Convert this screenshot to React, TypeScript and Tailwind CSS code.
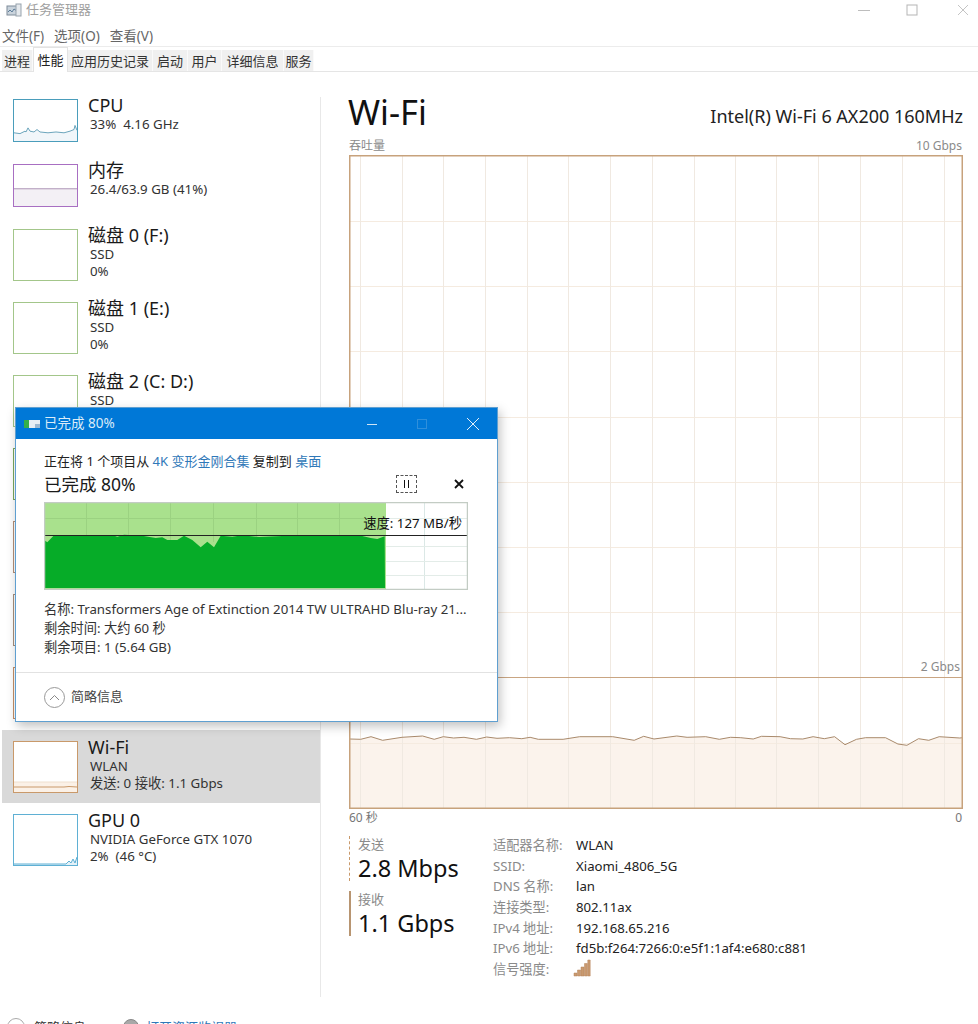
import type { ReactNode } from 'react';

const WIFI_LINE = [
  [24, 237], [50, 238], [75, 230], [103, 241], [150, 232], [200, 228], [228, 238], [250, 230], [275, 234], [300, 232],
  [330, 238], [355, 231], [380, 235], [410, 233], [440, 236], [460, 232], [480, 238], [540, 238], [580, 230], [660, 230],
  [712, 241], [735, 229], [760, 237], [815, 228], [840, 232], [885, 230], [918, 238], [945, 232], [970, 233], [1000, 237],
  [1020, 229], [1065, 230], [1090, 236], [1120, 237], [1145, 230], [1172, 236], [1197, 230], [1222, 254], [1250, 238],
  [1272, 233], [1320, 233], [1350, 252], [1372, 256], [1400, 236], [1425, 241], [1450, 230], [1500, 234], [1528, 230],
].map(([x, y]) => [x / 2.42 - 9, y / 3 + 505]);

const COPY_LINE = [
  [45, 138], [55, 145], [75, 124], [250, 123], [265, 128], [285, 122], [340, 125], [380, 132], [400, 130], [415, 138],
  [445, 138], [465, 125], [490, 138], [515, 160], [535, 143], [555, 160], [575, 125], [610, 128], [640, 124], [690, 129],
  [760, 126], [900, 125], [990, 124], [1025, 132], [1045, 135], [1067, 127],
].map(([x, y]) => [x / 3 - 15, y / 3 - 8]);

const toPoints = (pts: number[][]) => pts.map(([x, y]) => `${x.toFixed(1)},${y.toFixed(1)}`).join(' ');

const TABS = [
  { label: '进程', w: 'w-[31px]' },
  { label: '性能', w: 'w-[35px]', active: true },
  { label: '应用历史记录', w: 'w-[85px]' },
  { label: '启动', w: 'w-[35px]' },
  { label: '用户', w: 'w-[34px]' },
  { label: '详细信息', w: 'w-[62px]' },
  { label: '服务', w: 'w-[30px]' },
];

const DETAILS = [
  ['适配器名称:', 'WLAN'],
  ['SSID:', 'Xiaomi_4806_5G'],
  ['DNS 名称:', 'lan'],
  ['连接类型:', '802.11ax'],
  ['IPv4 地址:', '192.168.65.216'],
  ['IPv6 地址:', 'fd5b:f264:7266:0:e5f1:1af4:e680:c881'],
];

function Thumb({ border, h = 'h-[52px]', children }: { border: string; h?: string; children?: ReactNode }) {
  return (
    <div className={`w-[65px] ${h} mt-[5px] shrink-0 border-[1.5px] bg-white ${border}`}>
      <svg viewBox="0 0 63 50" preserveAspectRatio="none" className="w-full h-full block">
        {children}
      </svg>
    </div>
  );
}

function Item({ title, lines, thumb, tall = true, selected }: {
  title?: string; lines?: string[]; thumb: ReactNode; tall?: boolean; selected?: boolean;
}) {
  return (
    <div className={`flex items-start gap-[10px] pl-[11px] pt-[6px] ${tall ? 'h-[73px]' : 'h-[65px]'} ${selected ? 'bg-[#d9d9d9]' : ''}`}>
      {thumb}
      <div className="min-w-0">
        <div className="text-[18px] leading-[22px] text-[#1a1a1a] whitespace-nowrap">{title}</div>
        {lines?.map((l) => (
          <div key={l} className="pl-[2px] text-[13.3px] leading-[17px] text-[#333] whitespace-pre">{l}</div>
        ))}
      </div>
    </div>
  );
}

function AppIcon() {
  return (
    <svg width="16" height="15" viewBox="0 0 16 15" className="shrink-0">
      <rect x="1" y="3" width="11" height="9" fill="#c9d3dc" stroke="#7f8c99" />
      <path d="M2 9l2-2 2 2 2-3 3 2" fill="none" stroke="#5b7c99" />
      <rect x="10" y="1" width="5" height="12" fill="#e5e9ed" stroke="#98a3ad" />
    </svg>
  );
}

function WifiChart() {
  const hLines = [66, 131, 196, 262, 327, 392, 457, 588];
  const vLines = [11, 53, 94, 136, 178, 219, 261, 303, 345, 386, 427, 469, 511, 553, 595];
  const line = toPoints(WIFI_LINE);
  return (
    <div className="relative w-[614px] h-[654px]">
      <svg width="614" height="654" className="block">
        <polygon points={`0.5,${WIFI_LINE[0][1]} ${line} 613.5,${WIFI_LINE[WIFI_LINE.length - 1][1]} 613.5,653 0.5,653`} fill="#fbf3ec" />
        {hLines.map((y) => <line key={y} x1="1" x2="613" y1={y + 0.5} y2={y + 0.5} stroke="#f5ebe0" />)}
        {vLines.map((x) => <line key={x} x1={x + 0.5} x2={x + 0.5} y1="1" y2="653" stroke="#f0e9e1" />)}
        <line x1="1" x2="613" y1="522.5" y2="522.5" stroke="#c9a582" />
        <polyline points={line} fill="none" stroke="#a98a6c" />
        <rect x="0.75" y="0.75" width="612.5" height="652.5" fill="none" stroke="#c7a27c" strokeWidth="1.5" />
      </svg>
      <span className="absolute right-[3px] top-[503px] text-[12px] leading-[17px] text-[#8a8a8a]">2 Gbps</span>
    </div>
  );
}

function CopyDialog() {
  const top = toPoints(COPY_LINE);
  return (
    <div className="absolute left-[15px] top-[407px] w-[483px] h-[315px] flex flex-col bg-white border border-[#5f9fd0] shadow-[2px_4px_10px_rgba(0,0,0,0.25)]">
      <div className="h-[31px] shrink-0 flex items-center bg-[#0078d7] text-white pl-[8px]">
        <svg width="16" height="8" viewBox="0 0 16 8" className="shrink-0">
          <rect width="5" height="8" fill="#35b04a" />
          <rect x="5" width="11" height="8" fill="#e8eef4" />
          <rect x="11" y="4" width="5" height="4" fill="#9db8d0" />
        </svg>
        <span className="ml-[4px] text-[13.5px] leading-[18px] -mt-[2px] text-[#dcecf8]">已完成 80%</span>
        <div className="ml-auto flex items-center">
          <svg width="12" height="12" viewBox="0 0 12 12"><path d="M1 6.5h10" stroke="#cfe4f5" /></svg>
          <svg width="12" height="12" viewBox="0 0 12 12" className="ml-[38px]"><rect x="1.5" y="1.5" width="9" height="9" fill="none" stroke="#2f8fdb" /></svg>
          <svg width="14" height="14" viewBox="0 0 14 14" className="ml-[38px] mr-[17px]"><path d="M1 1l12 12M13 1L1 13" stroke="#e3f0fa" /></svg>
        </div>
      </div>

      <div className="pl-[28px] pr-[29px] pt-[13px]">
        <div className="text-[13px] leading-[18px] text-[#222] whitespace-nowrap">
          正在将 1 个项目从 <span className="text-[#2f78b8]">4K 变形金刚合集</span> 复制到 <span className="text-[#2f78b8]">桌面</span>
        </div>
        <div className="flex items-center h-[26px] mt-[1px]">
          <span className="text-[17.5px] text-[#1a1a1a]">已完成 80%</span>
          <div className="ml-auto w-[21px] h-[18px] flex items-center justify-center gap-[3px] border border-dashed border-[#555]">
            <span className="w-px h-[8px] bg-[#111]" />
            <span className="w-px h-[8px] bg-[#111]" />
          </div>
          <svg width="10" height="10" viewBox="0 0 10 10" className="ml-[37px] mr-[4px]"><path d="M1 1l8 8M9 1L1 9" stroke="#111" strokeWidth="1.8" /></svg>
        </div>

        <div className="relative w-[424px] h-[88px] mt-[5px]">
          <svg width="424" height="88" className="block">
            {[87, 129, 171, 214, 257, 298, 340, 425].map((x) => (
              <line key={x} x1={x - 44.5} x2={x - 44.5} y1="1" y2="87" stroke="#dbe8e6" />
            ))}
            {[16, 44, 59, 73].map((y) => <line key={y} x1="1" x2="423" y1={y + 0.5} y2={y + 0.5} stroke="#e3ece8" />)}
            <rect x="1" y="1" width="341" height="86" fill="#a9e18d" />
            {[87, 129, 171, 214, 257, 298, 340].map((x) => (
              <line key={x} x1={x - 44.5} x2={x - 44.5} y1="1" y2="40" stroke="#9bd281" />
            ))}
            <line x1="1" x2="342" y1="16.5" y2="16.5" stroke="#9bd281" />
            <polygon points={`1,86 ${top} 341,86`} fill="#06ac28" />
            <line x1="1" x2="423" y1="33.5" y2="33.5" stroke="#222" />
            <rect x="0.5" y="0.5" width="423" height="87" fill="none" stroke="#c3ccc4" strokeWidth="1.5" />
          </svg>
          <span className="absolute right-[6px] top-[12px] text-[13.3px] leading-[18px] text-[#111] whitespace-nowrap">速度: 127 MB/秒</span>
        </div>

        <div className="mt-[10px] text-[13.25px] leading-[19px] text-[#333]">
          <div className="whitespace-nowrap">名称: Transformers Age of Extinction 2014 TW ULTRAHD Blu-ray 21...</div>
          <div>剩余时间: 大约 60 秒</div>
          <div>剩余项目: 1 (5.64 GB)</div>
        </div>
      </div>

      <div className="mt-auto h-[49px] border-t border-[#e2e2e2] flex items-center pl-[28px]">
        <div className="w-[21px] h-[21px] rounded-full border border-[#999] flex items-center justify-center">
          <svg width="11" height="7" viewBox="0 0 11 7"><path d="M1 6l4.5-4.5L10 6" fill="none" stroke="#888" /></svg>
        </div>
        <span className="ml-[6px] text-[13px] text-[#444]">简略信息</span>
      </div>
    </div>
  );
}

export default function App() {
  return (
    <div className="relative w-[978px] h-[1024px] overflow-hidden bg-white font-['Noto_Sans','Noto_Sans_CJK_SC',sans-serif]">
      {/* title bar */}
      <div className="h-[20px] flex items-center pl-[6px] pr-[9px]">
        <AppIcon />
        <span className="ml-[4px] text-[13px] text-[#a0a0a0]">任务管理器</span>
        <div className="ml-auto flex items-center">
          <svg width="12" height="12" viewBox="0 0 12 12"><path d="M0 6.5h12" stroke="#bdbdbd" /></svg>
          <svg width="12" height="12" viewBox="0 0 12 12" className="ml-[36px]"><rect x="1" y="1" width="10" height="10" fill="none" stroke="#b5b5b5" /></svg>
          <svg width="12" height="12" viewBox="0 0 12 12" className="ml-[39px]"><path d="M1 1l10 10M11 1L1 11" stroke="#c4c4c4" /></svg>
        </div>
      </div>

      {/* menu */}
      <div className="h-[27px] pt-[6px] flex gap-[10px] pl-[2px] border-b border-[#ececec] text-[13.5px] leading-[20px] text-[#666]">
        <span>文件(F)</span>
        <span>选项(O)</span>
        <span>查看(V)</span>
      </div>

      {/* tabs */}
      <div className="h-[25px] flex items-end pl-[2px] border-b border-[#e5e5e5]">
        {TABS.map((t) => (
          <div
            key={t.label}
            className={`${t.w} text-center text-[13px] whitespace-nowrap ${t.active
              ? 'h-[25px] leading-[24px] bg-white text-[#222] border-x border-t border-[#e3e3e3] -mb-px'
              : 'h-[21px] leading-[22px] bg-[#f0f0f0] text-[#333] border-r border-[#fafafa]'}`}
          >
            {t.label}
          </div>
        ))}
      </div>

      <div className="flex">
        {/* sidebar */}
        <div className="ml-[2px] w-[318px] mt-[16px] shrink-0">
          <Item title="CPU" lines={['33%  4.16 GHz']} tall={false} thumb={
            <Thumb border="border-[#4a9dbb]" h="h-[43px]">
              <polygon points="0,40 6,41 11,38 12,39 14,34 16,38 20,39 23,36 26,39 34,40 42,39 50,40 56,38 60,36 61,31 63,37 63,50 0,50" fill="#f1f6fa" />
              <polyline points="0,40 6,41 11,38 12,39 14,34 16,38 20,39 23,36 26,39 34,40 42,39 50,40 56,38 60,36 61,31 63,37" fill="none" stroke="#5d9cb5" />
            </Thumb>
          } />
          <Item title="内存" lines={['26.4/63.9 GB (41%)']} tall={false} thumb={
            <Thumb border="border-[#a86fc2]" h="h-[43px]">
              <rect y="29" width="63" height="21" fill="#f3f0f5" />
              <line x1="0" x2="63" y1="29" y2="29" stroke="#a58ab0" />
            </Thumb>
          } />
          <Item title="磁盘 0 (F:)" lines={['SSD', '0%']} thumb={<Thumb border="border-[#a3c68a]" />} />
          <Item title="磁盘 1 (E:)" lines={['SSD', '0%']} thumb={<Thumb border="border-[#a3c68a]" />} />
          <Item title="磁盘 2 (C: D:)" lines={['SSD']} thumb={<Thumb border="border-[#a3c68a]" />} />
          <Item thumb={<Thumb border="border-[#79a85e]" />} />
          <Item thumb={<Thumb border="border-[#b58f78]" />} />
          <Item thumb={<Thumb border="border-[#a88f7c]" />} />
          <Item thumb={<Thumb border="border-[#c58f68]" />} />
          <div className="h-px" />
          <Item title="Wi-Fi" lines={['WLAN', '发送: 0 接收: 1.1 Gbps']} selected thumb={
            <Thumb border="border-[#c9996a]">
              <rect y="40" width="63" height="10" fill="#fbf1e7" />
              <line x1="0" x2="63" y1="40" y2="40" stroke="#efe0cf" />
              <polyline points="0,45 50,45 55,44.500 63,45" fill="none" stroke="#c9996a" />
            </Thumb>
          } />
          <Item title="GPU 0" lines={['NVIDIA GeForce GTX 1070', '2%  (46 °C)']} thumb={
            <Thumb border="border-[#5fb0d4]">
              <polygon points="0,49 52,49 55,46 57,48 59,44 61,48 63,42 63,50 0,50" fill="#e3f1f8" />
              <polyline points="0,49 52,49 55,46 57,48 59,44 61,48 63,42" fill="none" stroke="#5fb0d4" />
            </Thumb>
          } />
        </div>

        <div className="w-px h-[900px] mt-[25px] bg-[#e8e8e8] shrink-0" />

        {/* detail pane */}
        <div className="ml-[28px] w-[614px] pt-[20px]">
          <div className="h-[40px] flex items-center justify-between">
            <span className="-ml-[1px] text-[34.5px] leading-[40px] text-[#111]">Wi-Fi</span>
            <span className="text-[18px] leading-[24px] mt-[8px] text-[#222]">Intel(R) Wi-Fi 6 AX200 160MHz</span>
          </div>
          <div className="h-[18px] mt-[5px] pr-[1px] flex justify-between text-[12px] leading-[17px] text-[#8a8a8a]">
            <span>吞吐量</span>
            <span>10 Gbps</span>
          </div>
          <WifiChart />
          <div className="h-[18px] flex justify-between text-[12px] leading-[18px] text-[#777]">
            <span>60 秒</span>
            <span className="pr-[1px]">0</span>
          </div>

          <div className="flex mt-[8px]">
            <div className="w-[144px] shrink-0">
              <div className="h-[45px] mt-[2px] border-l border-dashed border-[#c9996a] pl-[8px]">
                <div className="-mt-[1px] text-[13px] leading-[16px] text-[#8a8a8a]">发送</div>
                <div className="text-[23.5px] leading-[32px] text-[#111] whitespace-nowrap">2.8 Mbps</div>
              </div>
              <div className="h-[45px] mt-[11px] border-l-2 border-[#b89571] pl-[7px]">
                <div className="-mt-[1px] text-[13px] leading-[16px] text-[#8a8a8a]">接收</div>
                <div className="text-[23.5px] leading-[32px] text-[#111] whitespace-nowrap">1.1 Gbps</div>
              </div>
            </div>
            <div className="grid grid-cols-[83px_auto] auto-rows-[20.7px] text-[13.2px] leading-[20px]">
              {DETAILS.map(([k, v]) => (
                <div key={k} className="contents">
                  <span className="text-[#8a8a8a] whitespace-nowrap">{k}</span>
                  <span className="text-[#222] whitespace-nowrap">{v}</span>
                </div>
              ))}
              <span className="text-[#8a8a8a]">信号强度:</span>
              <svg width="18" height="18" viewBox="0 0 18 18" className="-ml-[3px]">
                <path d="M1 17v-3h3v3zM4.500 17v-6h3v6zM8 17V8h3v9zM11.500 17V4.500h2.800V17zM14.800 17V1h2.400v16z" fill="#c99a70" stroke="#b5835a" strokeWidth="0.5" />
              </svg>
            </div>
          </div>
        </div>
      </div>

      {/* footer, cut off by the window edge */}
      <div className="absolute left-[7px] top-[1017px] flex items-center text-[13px] leading-[20px]">
        <div className="w-[18px] h-[18px] rounded-full border border-[#aaa]" />
        <span className="ml-[9px] text-[#333]">简略信息</span>
        <div className="ml-[37px] w-[16px] h-[16px] rounded-full bg-[#a8a8a8] border border-[#888]" />
        <span className="ml-[7px] text-[#2f78b8]">打开资源监视器</span>
      </div>

      <CopyDialog />
    </div>
  );
}
